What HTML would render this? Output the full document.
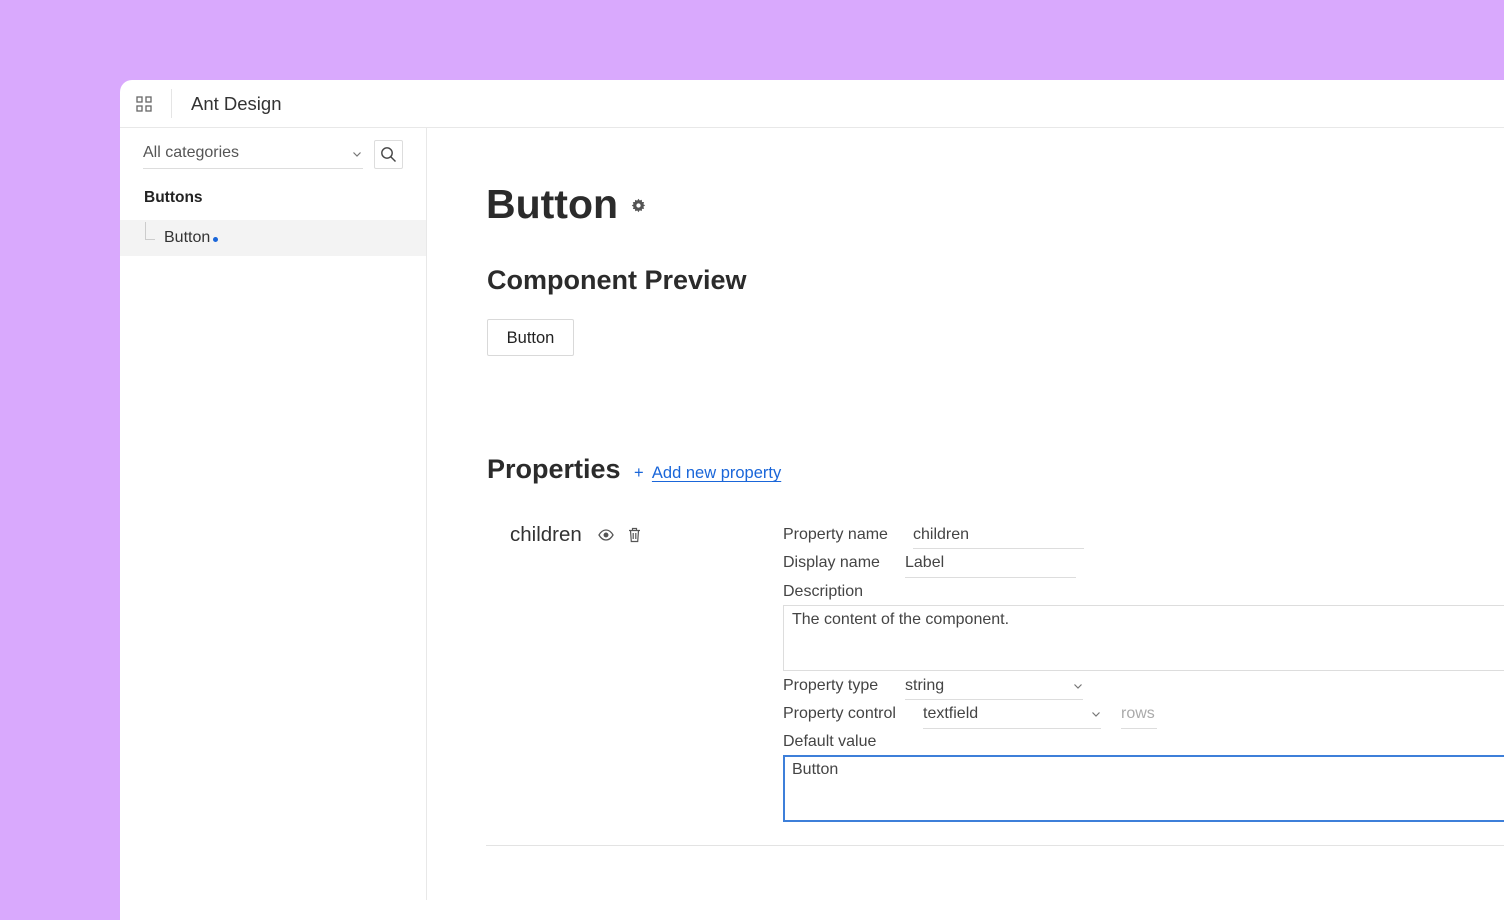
<!DOCTYPE html>
<html><head><meta charset="utf-8"><style>
*{margin:0;padding:0;box-sizing:border-box}
body{width:1504px;height:900px;background:#d9a9fd;font-family:"Liberation Sans",sans-serif;color:#333;position:relative;overflow:hidden}
.win{position:absolute;left:120px;top:80px;width:1400px;height:840px;background:#fff;border-top-left-radius:12px}
.a{position:absolute;white-space:nowrap}
.ul{border-bottom:1px solid #ddd}
.lbl{font-size:16px;color:#444}
.val{font-size:16px;color:#444}
</style></head><body>
<div class="win"></div>
<svg class="a" style="left:136px;top:96px" width="16" height="16" viewBox="0 0 16 16" fill="none" stroke="#666" stroke-width="1.3"><rect x="1" y="1" width="5" height="5"/><rect x="10" y="1" width="5" height="5"/><rect x="1" y="10" width="5" height="5"/><rect x="10" y="10" width="5" height="5"/></svg>
<div class="a" style="left:171px;top:89px;width:1px;height:29px;background:#e5e5e5"></div>
<div class="a" style="left:191px;top:93px;font-size:18.5px;color:#333">Ant Design</div>
<div class="a" style="left:120px;top:127px;width:1384px;height:1px;background:#e8e8e8"></div>
<div class="a" style="left:426px;top:128px;width:1px;height:772px;background:#e8e8e8"></div>
<div class="a ul" style="left:143px;top:144px;width:220px;height:25px;font-size:16px;color:#555">All categories</div>
<svg class="a" style="left:352px;top:150px" width="10" height="8" viewBox="0 0 10 8" fill="none" stroke="#777" stroke-width="1.2"><path d="M1.5 2.5l3.5 3.5 3.5-3.5"/></svg>
<div class="a" style="left:374px;top:140px;width:29px;height:29px;border:1px solid #ddd;border-radius:2px"></div>
<svg class="a" style="left:380px;top:146px" width="17" height="17" viewBox="0 0 17 17" fill="none" stroke="#444" stroke-width="1.4"><circle cx="7" cy="7" r="5.2"/><path d="M11 11l4.5 4.5"/></svg>
<div class="a" style="left:144px;top:189px;font-size:15.5px;color:#222;font-weight:bold">Buttons</div>
<div class="a" style="left:120px;top:220px;width:306px;height:36px;background:#f3f3f3"></div>
<div class="a" style="left:145px;top:222px;width:10px;height:18px;border-left:1px solid #ccc;border-bottom:1px solid #ccc"></div>
<div class="a" style="left:164px;top:229px;font-size:16px;color:#333">Button</div>
<div class="a" style="left:213px;top:237px;width:5px;height:5px;border-radius:50%;background:#1a66d9"></div>
<div class="a" style="left:486px;top:181px;font-size:41px;font-weight:bold;color:#2b2b2b">Button</div>
<svg class="a" style="left:631px;top:198px" width="15" height="15" viewBox="0 0 16 16"><path fill="#555" d="M8 0.8l1.3 1.9 2.2-0.8 0.2 2.3 2.3 0.2-0.8 2.2 1.9 1.3-1.9 1.3 0.8 2.2-2.3 0.2-0.2 2.3-2.2-0.8L8 15.2l-1.3-1.9-2.2 0.8-0.2-2.3-2.3-0.2 0.8-2.2L0.8 8l1.9-1.3-0.8-2.2 2.3-0.2 0.2-2.3 2.2 0.8z"/><circle cx="8" cy="8" r="2.3" fill="#fff"/></svg>
<div class="a" style="left:487px;top:265px;font-size:27px;color:#2b2b2b;font-weight:bold">Component Preview</div>
<div class="a" style="left:487px;top:319px;width:87px;height:37px;border:1px solid #d9d9d9;border-radius:2px;font-size:16.5px;color:#222;text-align:center;line-height:37px">Button</div>
<div class="a" style="left:487px;top:454px;font-size:27px;color:#2b2b2b;font-weight:bold">Properties</div>
<div class="a" style="left:634px;top:464px;font-size:16.5px;color:#1a66d9">+&nbsp; <span style="text-decoration:underline;text-underline-offset:3px">Add new property</span></div>
<div class="a" style="left:510px;top:523px;font-size:20.5px;color:#333">children</div>
<svg class="a" style="left:598px;top:529px" width="16" height="12" viewBox="0 0 16 12" fill="none" stroke="#555" stroke-width="1.3"><path d="M1 6c2-3.5 4.3-5 7-5s5 1.5 7 5c-2 3.5-4.3 5-7 5S3 9.5 1 6z"/><circle cx="8" cy="6" r="1.8" fill="#555"/></svg>
<svg class="a" style="left:628px;top:527px" width="13" height="16" viewBox="0 0 13 16" fill="none" stroke="#555" stroke-width="1.2"><path d="M1 3.5h11M4.5 3.5V1.5h4v2M2.5 3.5l0.8 11h6.4l0.8-11M5.2 6v6M7.8 6v6"/></svg>
<div class="a lbl" style="left:783px;top:526px">Property name</div>
<div class="a val ul" style="left:913px;top:526px;width:171px;height:23px">children</div>
<div class="a lbl" style="left:783px;top:554px">Display name</div>
<div class="a val ul" style="left:905px;top:554px;width:171px;height:24px">Label</div>
<div class="a lbl" style="left:783px;top:583px">Description</div>
<div class="a" style="left:783px;top:605px;width:740px;height:66px;border:1px solid #ddd;font-size:16px;color:#444;padding:5px 8px">The content of the component.</div>
<div class="a lbl" style="left:783px;top:677px">Property type</div>
<div class="a val ul" style="left:905px;top:677px;width:178px;height:23px">string</div>
<svg class="a" style="left:1073px;top:682px" width="10" height="8" viewBox="0 0 10 8" fill="none" stroke="#777" stroke-width="1.2"><path d="M1.5 2.5l3.5 3.5 3.5-3.5"/></svg>
<div class="a lbl" style="left:783px;top:705px">Property control</div>
<div class="a val ul" style="left:923px;top:705px;width:178px;height:24px">textfield</div>
<svg class="a" style="left:1091px;top:710px" width="10" height="8" viewBox="0 0 10 8" fill="none" stroke="#777" stroke-width="1.2"><path d="M1.5 2.5l3.5 3.5 3.5-3.5"/></svg>
<div class="a ul" style="left:1121px;top:705px;width:36px;height:24px;font-size:16px;color:#aaa">rows</div>
<div class="a lbl" style="left:783px;top:733px">Default value</div>
<div class="a" style="left:783px;top:755px;width:740px;height:67px;border:2px solid #3d7fd9;font-size:16px;color:#444;padding:4px 7px">Button</div>
<div class="a" style="left:486px;top:845px;width:1020px;height:1px;background:#e3e3e3"></div>
</body></html>
